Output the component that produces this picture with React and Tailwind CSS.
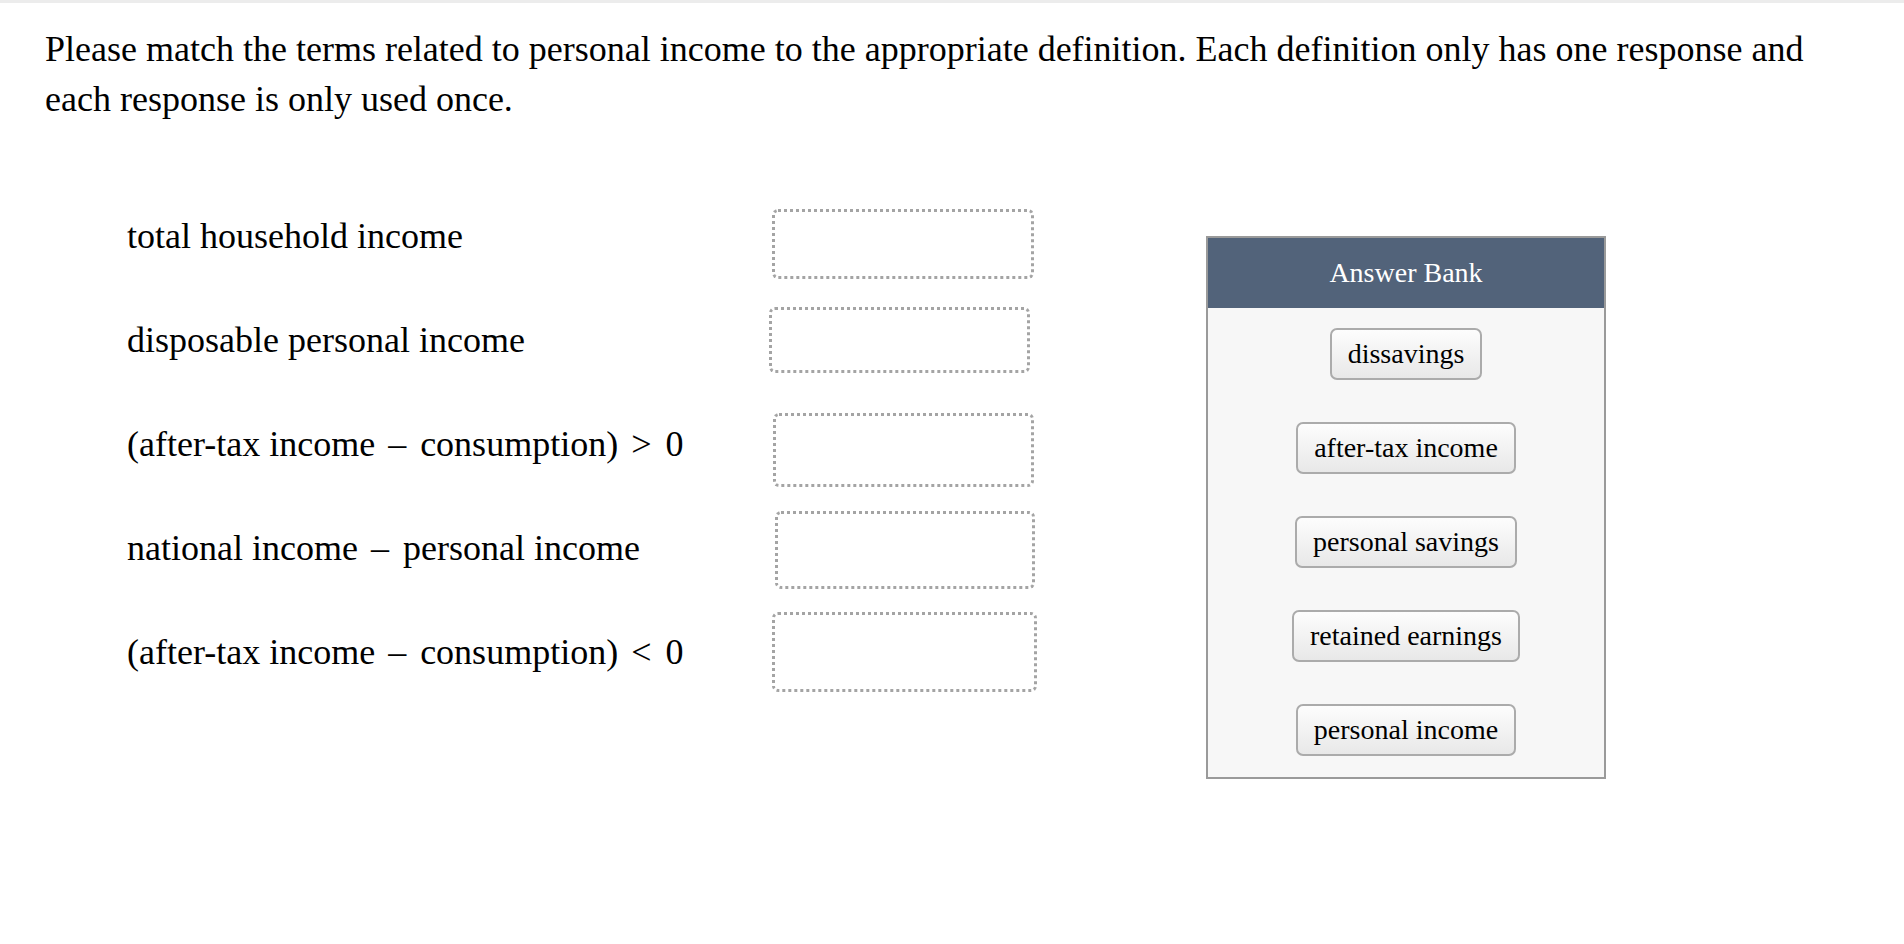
const Dash = () => <span className="ml-[13px] mr-[14px]">{"\u2013"}</span>;
const Rel = ({ children }) => (
  <span className="ml-[13px] mr-[14px]">{children}</span>
);

const terms = [
  {
    key: "t1",
    label: "total household income",
    box: "mt-[21px] ml-[0px] w-[262px] h-[70px]",
  },
  {
    key: "t2",
    label: "disposable personal income",
    box: "mt-[15px] ml-[-3px] w-[261px] h-[66px]",
  },
  {
    key: "t3",
    label: (
      <>
        (after-tax income<Dash />consumption)<Rel>{">"}</Rel>0
      </>
    ),
    box: "mt-[17px] ml-[1px] w-[261px] h-[74px]",
  },
  {
    key: "t4",
    label: (
      <>
        national income<Dash />personal income
      </>
    ),
    box: "mt-[11px] ml-[3px] w-[260px] h-[78px]",
  },
  {
    key: "t5",
    label: (
      <>
        (after-tax income<Dash />consumption)<Rel>{"<"}</Rel>0
      </>
    ),
    box: "mt-[8px] ml-[0px] w-[265px] h-[80px]",
  },
];

const answers = [
  "dissavings",
  "after-tax income",
  "personal savings",
  "retained earnings",
  "personal income",
];

const TermRow = ({ label, box }) => (
  <div className="flex items-start h-[104px]">
    <div className="w-[645px] mt-[26px] text-[36px] leading-[44px] whitespace-nowrap">
      {label}
    </div>
    <div
      className={`border-[3px] border-dotted border-[#a4a4a4] rounded-[6px] bg-white ${box}`}
    />
  </div>
);

const AnswerBank = () => (
  <div className="w-[400px] border-2 border-[#9a9a9a] mt-[48px] ml-[161px]">
    <div className="h-[70px] bg-[#52637a] text-white text-[28px] flex items-center justify-center">
      Answer Bank
    </div>
    <div className="bg-[#f7f7f7] flex flex-col items-center gap-[42px] pt-[20px] pb-[21px]">
      {answers.map((a) => (
        <div
          key={a}
          className="h-[52px] px-[16px] flex items-center border-2 border-[#ababab] rounded-[7px] bg-gradient-to-b from-[#fdfdfd] to-[#e8e8e8] text-[28px] whitespace-nowrap"
        >
          {a}
        </div>
      ))}
    </div>
  </div>
);

export default function App() {
  return (
    <div className="min-h-screen bg-white text-black font-['Liberation_Serif','Times_New_Roman',serif]">
      <div className="h-[3px] bg-[#ececec]" />
      <div className="px-[45px]">
        <p className="mt-[21px] text-[36px] leading-[50px]">
          Please match the terms related to personal income to the appropriate
          definition. Each definition only has one response and each response
          is only used once.
        </p>
        <div className="flex items-start mt-[64px]">
          <div className="w-[1000px] pl-[82px]">
            {terms.map((t) => (
              <TermRow key={t.key} label={t.label} box={t.box} />
            ))}
          </div>
          <AnswerBank />
        </div>
      </div>
    </div>
  );
}
